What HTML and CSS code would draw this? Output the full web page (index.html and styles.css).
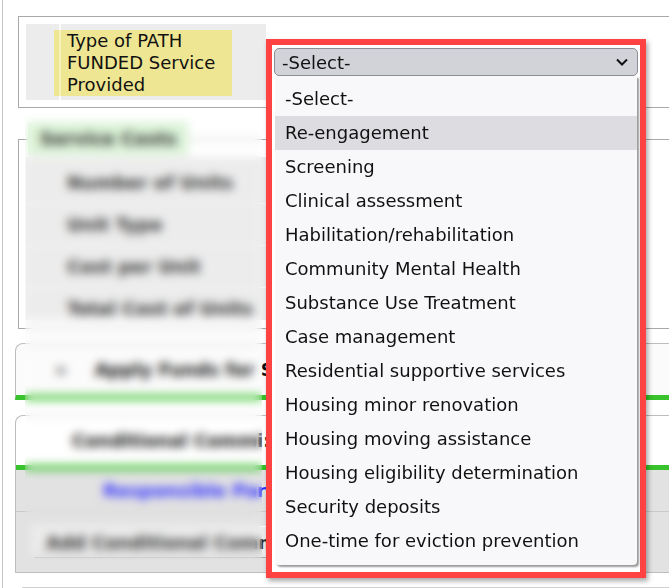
FILE: index.html
```html
<!DOCTYPE html>
<html>
<head>
<meta charset="utf-8">
<link rel="stylesheet" href="styles.css">
</head>
<body>
<div class="page">
  <div class="box1">
    <div class="labelcell">
      <div class="label">Type of PATH<br>FUNDED Service<br>Provided</div>
    </div>
  </div>
  <div class="box2">
    <div class="legend">Service Costs</div>
    <div class="costs">
      <div class="row">Number of Units</div>
      <div class="row">Unit Type</div>
      <div class="row">Cost per Unit</div>
      <div class="row">Total Cost of Units</div>
    </div>
  </div>
  <div class="box3">
    <span class="bullet">»</span><span class="title">Apply Funds for S</span>
  </div>
  <div class="box4">
    <div class="hdr4"><span>Conditional Commi:</span></div>
    <div class="body4">
      <div class="linkrow"><a class="link">Responsible Part</a></div>
      <div class="btnrow"><button class="btn">Add Conditional Comm</button></div>
    </div>
  </div>
  <div class="bottom"></div>
</div>
<div class="blur"></div>
<div class="dropdown">
  <div class="select">
    <span>-Select-</span>
    <svg class="chev" width="12" height="8" viewBox="0 0 12 8"><polyline points="1,1.5 6,6.5 11,1.5" fill="none" stroke="#111" stroke-width="2"/></svg>
  </div>
  <div class="list">
    <div class="opt">-Select-</div>
    <div class="opt hl">Re-engagement</div>
    <div class="opt">Screening</div>
    <div class="opt">Clinical assessment</div>
    <div class="opt">Habilitation/rehabilitation</div>
    <div class="opt">Community Mental Health</div>
    <div class="opt">Substance Use Treatment</div>
    <div class="opt">Case management</div>
    <div class="opt">Residential supportive services</div>
    <div class="opt">Housing minor renovation</div>
    <div class="opt">Housing moving assistance</div>
    <div class="opt">Housing eligibility determination</div>
    <div class="opt">Security deposits</div>
    <div class="opt">One-time for eviction prevention</div>
  </div>
</div>
</body>
</html>
```
FILE: styles.css
```css
html, body {
  margin: 0;
  padding: 0;
  overflow: hidden;
  background: #fff;
}
body {
  position: relative;
  width: 669px;
  height: 588px;
  font-family: "DejaVu Sans", Verdana, sans-serif;
  font-size: 18px;
  color: #111;
}
.page {
  margin-left: 2px;
  border-left: 1px solid #c6c6c6;
  height: 588px;
  padding-top: 16px;
  box-sizing: border-box;
  overflow: hidden;
}
.box1 {
  margin-left: 15px;
  width: 700px;
  height: 92px;
  box-sizing: border-box;
  border: 1px solid #a9a9a9;
  border-right: none;
  padding: 7px;
}
.labelcell {
  width: 240px;
  height: 76px;
  box-sizing: border-box;
  padding: 6px 0 0 28px;
  background: linear-gradient(to right, #ececec 33px, #fbfbfb 33px, #fbfbfb 35px, #ececec 35px);
}
.label {
  width: 178px;
  height: 66px;
  box-sizing: border-box;
  padding-left: 13px;
  line-height: 22px;
  color: #111;
  background: linear-gradient(to right, #eee692 5px, #f6f0bb 5px, #f6f0bb 7px, #eee692 7px);
}
.box2 {
  margin: 31px 0 0 15px;
  width: 700px;
  height: 190px;
  box-sizing: border-box;
  border: 1px solid #a9a9a9;
  border-right: none;
  padding-left: 7px;
}
.legend {
  margin: -18px 0 0 2px;
  width: 160px;
  height: 33px;
  line-height: 33px;
  box-sizing: border-box;
  padding-left: 12px;
  background: #dcf3d8;
  font-weight: bold;
  color: #333;
}
.costs {
  margin-top: 2px;
  width: 420px;
  height: 163px;
  box-sizing: border-box;
  padding-top: 6px;
  background: #ececec;
  display: flex;
  flex-direction: column;
  gap: 1px;
}
.row {
  height: 40px;
  line-height: 40px;
  padding-left: 41px;
  color: #333;
  font-weight: bold;
  border-bottom: 1px solid #f6f6f6;
}
.box3 {
  margin: 14px 0 0 12px;
  width: 700px;
  height: 57px;
  box-sizing: border-box;
  border-top: 1px solid #bdbdbd;
  border-left: 1px solid #bdbdbd;
  border-top-left-radius: 8px;
  border-bottom: 5px solid #38c22b;
  background: #fbfbfb;
  display: flex;
  align-items: center;
}
.bullet {
  margin-left: 39px;
  font-weight: bold;
  color: #333;
}
.title {
  margin-left: 28px;
  font-weight: bold;
  color: #111;
  white-space: nowrap;
}
.box4 {
  margin: 15px 0 0 12px;
  width: 700px;
  box-sizing: border-box;
  border: 1px solid #bdbdbd;
  border-right: none;
  border-top-left-radius: 8px;
}
.hdr4 {
  height: 54px;
  box-sizing: border-box;
  border-bottom: 5px solid #38c22b;
  display: flex;
  align-items: center;
  padding-left: 56px;
  font-weight: bold;
  color: #111;
  white-space: nowrap;
}
.body4 {
  background: #e2e2e2;
}
.linkrow {
  height: 42px;
  box-sizing: border-box;
  border-bottom: 1px solid #c9c9c9;
  display: flex;
  align-items: center;
  padding-left: 87px;
  white-space: nowrap;
}
.link {
  color: #2f2fff;
  font-weight: bold;
}
.btnrow {
  height: 60px;
  display: flex;
  align-items: center;
  padding-left: 17px;
}
.btn {
  font-family: inherit;
  font-size: 18px;
  font-weight: bold;
  color: #333;
  height: 32px;
  white-space: nowrap;
  padding: 0 12px;
  background: #ebebeb;
  border: 1px solid;
  border-color: #fff #a8a8a8 #a8a8a8 #fff;
}
.bottom {
  margin: 14px 0 0 19px;
  width: 700px;
  border-top: 2px solid #d0d0d0;
}
.blur {
  position: absolute;
  left: 25px;
  top: 114px;
  width: 237px;
  height: 446px;
  backdrop-filter: blur(5px);
  -webkit-backdrop-filter: blur(5px);
}
.dropdown {
  position: absolute;
  left: 266px;
  top: 39px;
  width: 380px;
  height: 539px;
  box-sizing: border-box;
  border: 6px solid #ff4343;
  background: #fff;
  box-shadow: 2px 3px 5px rgba(0, 0, 0, 0.35);
  padding: 3px 0 0 2px;
}
.select {
  width: 364px;
  height: 28px;
  box-sizing: border-box;
  background: #d2d3d9;
  border: 1px solid #8d8d95;
  border-radius: 5px;
  display: flex;
  align-items: center;
  justify-content: space-between;
  padding: 0 9px 0 7px;
  color: #111;
}
.chev {
  display: block;
}
.list {
  margin-left: 1px;
  width: 362px;
  height: 489px;
  box-sizing: border-box;
  background: #f8f8fa;
  box-shadow: 2px 2px 2px rgba(0, 0, 0, 0.4);
  border-radius: 0 0 4px 4px;
  padding-top: 6px;
}
.opt {
  height: 34px;
  line-height: 34px;
  padding-left: 10px;
  color: #111;
  white-space: nowrap;
}
.opt.hl {
  background: #dcdce1;
}
```
